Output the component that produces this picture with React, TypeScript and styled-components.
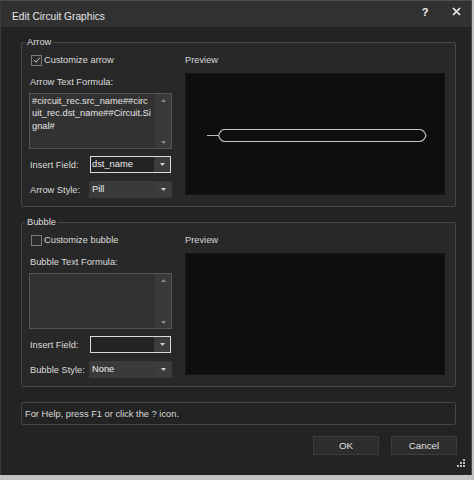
import React from 'react'
import styled, { createGlobalStyle } from 'styled-components'

const font = `"Liberation Sans", Arial, sans-serif`

const GlobalStyle = createGlobalStyle`
  html, body {
    margin: 0;
    padding: 0;
    background: #c3c3c3;
  }
  body {
    font-family: ${font};
  }
`

const Window = styled.div`
  position: relative;
  width: 472px;
  height: 475px;
  box-sizing: border-box;
  background: #232323;
  border-left: 1px solid #3a3a3a;
  border-right: 1px solid #484848;
  display: flex;
  flex-direction: column;
  color: #dcdcdc;
  font-size: 9.3px;
`

const TitleBar = styled.div`
  height: 27px;
  box-sizing: border-box;
  border-top: 1px solid #4d4d4d;
  background: #313131;
  display: flex;
  align-items: flex-start;
  padding-left: 11px;
`

const TitleText = styled.div`
  flex: 1;
  margin-top: 10px;
  line-height: 12px;
  font-size: 10.2px;
  color: #e6e6e6;
`

const CaptionButton = styled.div<{ $w: number }>`
  width: ${(p) => p.$w}px;
  height: 21px;
  display: flex;
  align-items: center;
  justify-content: center;
  color: #f2f2f2;
  font-weight: bold;
  font-size: 11px;
`

const Content = styled.div`
  flex: 1;
  display: flex;
  flex-direction: column;
  padding: 9px 15px 0 20px;
`

const GroupBox = styled.fieldset<{ $top?: number }>`
  margin: ${(p) => p.$top || 0}px 0 0 0;
  padding: 6px 10px 8px 7px;
  border: 1px solid #474747;
  border-radius: 2px;
  background: #282828;
  min-width: 0;
`

const GroupLegend = styled.legend`
  padding: 0 2px;
  margin-left: -4px;
  line-height: 12px;
  color: #dedede;
`

const GroupGrid = styled.div`
  display: grid;
  grid-template-columns: 143px 260px;
  column-gap: 13px;
`

const Column = styled.div`
  display: flex;
  flex-direction: column;
`

const CheckRow = styled.label`
  height: 12px;
  display: flex;
  align-items: center;
  gap: 2px;
  padding-left: 2px;
`

const CheckBox = styled.span`
  width: 9px;
  height: 9px;
  border: 1px solid #7a7a7a;
  background: #2b2b2b;
  display: flex;
  align-items: center;
  justify-content: center;
`

const FieldLabel = styled.div<{ $top: number }>`
  margin-top: ${(p) => p.$top}px;
  line-height: 12px;
  padding-left: 1px;
`

const TextBox = styled.div`
  margin-top: 5px;
  height: 56px;
  box-sizing: border-box;
  border: 1px solid #545454;
  background: #323232;
  display: flex;
`

const TextContent = styled.div`
  flex: 1;
  padding: 1px 0 0 2px;
  line-height: 12.3px;
  white-space: pre;
  overflow: hidden;
  color: #e4e4e4;
`

const ScrollBar = styled.div`
  width: 16px;
  background: #3a3a3a;
  display: flex;
  flex-direction: column;
  justify-content: space-between;
  align-items: center;
  padding: 5px 0 4px;
`

const FieldRow = styled.div<{ $top: number }>`
  margin-top: ${(p) => p.$top}px;
  height: 17px;
  display: flex;
  align-items: center;
`

const RowLabel = styled.div`
  width: 60px;
  padding-left: 1px;
  box-sizing: border-box;
`

const Combo = styled.div<{ $focused?: boolean }>`
  width: ${(p) => (p.$focused ? 81 : 83)}px;
  margin-left: ${(p) => (p.$focused ? 1 : 0)}px;
  height: 17px;
  box-sizing: border-box;
  border: 1px solid ${(p) => (p.$focused ? '#dadada' : '#3a3a3a')};
  background: #3a3a3a;
  display: flex;
`

const ComboText = styled.div<{ $focused?: boolean }>`
  flex: 1;
  background: ${(p) => (p.$focused ? '#242424' : '#3a3a3a')};
  padding-left: ${(p) => (p.$focused ? 1 : 2)}px;
  line-height: 15px;
  color: #ededed;
`

const ComboButton = styled.div`
  width: 16px;
  display: flex;
  align-items: center;
  justify-content: center;
  background: #3c3c3c;
`

const PreviewLabel = styled.div`
  line-height: 12px;
  color: #d6d6d6;
`

const PreviewBox = styled.div<{ $h: number }>`
  margin-top: 7px;
  height: ${(p) => p.$h}px;
  background: #0e0e0e;
  border: 1px solid #161616;
  box-sizing: border-box;
`

const HelpBox = styled.div`
  margin-top: 15px;
  height: 23px;
  box-sizing: border-box;
  border: 1px solid #444444;
  border-radius: 2px;
  display: flex;
  align-items: center;
  padding-left: 3px;
  color: #dadada;
`

const ButtonRow = styled.div`
  margin-top: 11px;
  display: flex;
  justify-content: flex-end;
  gap: 12px;
  margin-right: -1px;
`

const DialogButton = styled.div`
  width: 66px;
  height: 19px;
  box-sizing: border-box;
  border: 1px solid #3d3d3d;
  background: #2d2d2d;
  display: flex;
  align-items: center;
  justify-content: center;
  font-size: 9.8px;
  color: #e2e2e2;
`

const Grip = styled.svg`
  position: absolute;
  right: 5px;
  bottom: 7px;
`

const CheckMark = () => (
  <svg width="8" height="8" viewBox="0 0 8 8">
    <polyline points="1,4 3,6.2 7,1.5" fill="none" stroke="#c8c8c8" strokeWidth="1" />
  </svg>
)

const CloseIcon = () => (
  <svg width="9" height="9" viewBox="0 0 9 9">
    <path d="M1 1 L8 8 M8 1 L1 8" stroke="#f0f0f0" strokeWidth="1.7" />
  </svg>
)

const Arrow = ({ up, color }: { up?: boolean; color: string }) => (
  <svg width="5" height="3" viewBox="0 0 5 3">
    <polygon points={up ? '0,3 5,3 2.5,0' : '0,0 5,0 2.5,3'} fill={color} />
  </svg>
)

interface ComboProps {
  value: string
  focused?: boolean
}

const ComboBox = ({ value, focused }: ComboProps) => (
  <Combo $focused={focused}>
    <ComboText $focused={focused}>{value}</ComboText>
    <ComboButton>
      <Arrow color="#d0d0d0" />
    </ComboButton>
  </Combo>
)

interface GroupProps {
  title: string
  checkLabel: string
  checked: boolean
  formulaLabel: string
  formula: string
  insertValue: string
  styleLabel: string
  styleValue: string
  top?: number
  children?: React.ReactNode
}

const Group = (props: GroupProps) => (
  <GroupBox $top={props.top}>
    <GroupLegend>{props.title}</GroupLegend>
    <GroupGrid>
      <Column>
        <CheckRow>
          <CheckBox>{props.checked && <CheckMark />}</CheckBox>
          {props.checkLabel}
        </CheckRow>
        <FieldLabel $top={10}>{props.formulaLabel}</FieldLabel>
        <TextBox>
          <TextContent>{props.formula}</TextContent>
          <ScrollBar>
            <Arrow up color="#8a8a8a" />
            <Arrow color="#8a8a8a" />
          </ScrollBar>
        </TextBox>
        <FieldRow $top={7}>
          <RowLabel>Insert Field:</RowLabel>
          <ComboBox value={props.insertValue} focused />
        </FieldRow>
        <FieldRow $top={8}>
          <RowLabel>{props.styleLabel}</RowLabel>
          <ComboBox value={props.styleValue} />
        </FieldRow>
      </Column>
      <Column>
        <PreviewLabel>Preview</PreviewLabel>
        <PreviewBox $h={122}>{props.children}</PreviewBox>
      </Column>
    </GroupGrid>
  </GroupBox>
)

const PillPreview = () => (
  <svg width="258" height="120" viewBox="0 0 258 120">
    <line x1="21" y1="61.5" x2="33" y2="61.5" stroke="#bdbdbd" strokeWidth="1" />
    <path
      d="M38 55.5 H234 Q238 56 240 61.5 Q238 67 234 67.5 H38 Q34.5 67 32.5 61.5 Q34.5 56 38 55.5 Z"
      fill="none"
      stroke="#c4c4c4"
      strokeWidth="1.1"
    />
  </svg>
)

const App = () => (
  <>
    <GlobalStyle />
    <Window>
      <TitleBar>
        <TitleText>Edit Circuit Graphics</TitleText>
        <CaptionButton $w={32}>?</CaptionButton>
        <CaptionButton $w={30}>
          <CloseIcon />
        </CaptionButton>
      </TitleBar>
      <Content>
        <Group
          title="Arrow"
          checkLabel="Customize arrow"
          checked
          formulaLabel="Arrow Text Formula:"
          formula={'#circuit_rec.src_name##circ\nuit_rec.dst_name##Circuit.Si\ngnal#'}
          insertValue="dst_name"
          styleLabel="Arrow Style:"
          styleValue="Pill"
        >
          <PillPreview />
        </Group>
        <Group
          top={9}
          title="Bubble"
          checkLabel="Customize bubble"
          checked={false}
          formulaLabel="Bubble Text Formula:"
          formula=""
          insertValue=""
          styleLabel="Bubble Style:"
          styleValue="None"
        />
        <HelpBox>For Help, press F1 or click the ? icon.</HelpBox>
        <ButtonRow>
          <DialogButton>OK</DialogButton>
          <DialogButton>Cancel</DialogButton>
        </ButtonRow>
      </Content>
      <Grip width="9" height="9" viewBox="0 0 9 9">
        {[
          [6, 0],
          [3, 3],
          [6, 3],
          [0, 6],
          [3, 6],
          [6, 6],
        ].map(([x, y]) => (
          <rect key={`${x}-${y}`} x={x} y={y} width="2" height="2" fill="#bcbcbc" />
        ))}
      </Grip>
    </Window>
  </>
)

export default App
